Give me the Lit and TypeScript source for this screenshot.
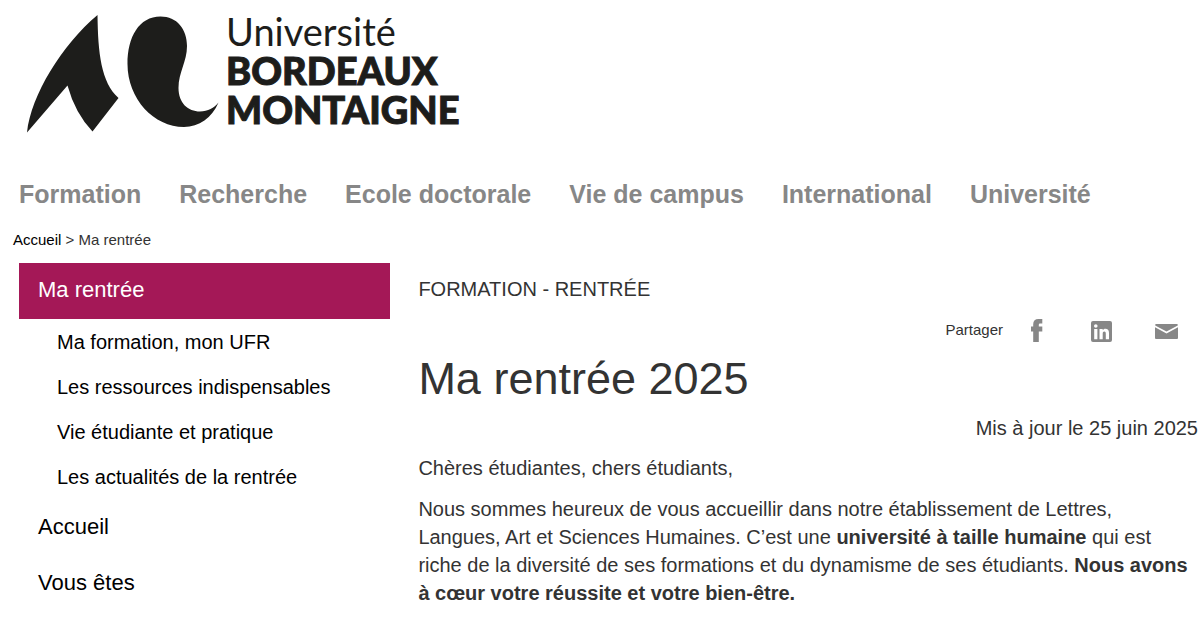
import { LitElement, html, css, svg } from "lit";
import { customElement } from "lit/decorators.js";

const SECTIONS = ["Formation", "Recherche", "Ecole doctorale", "Vie de campus", "International", "Université"];
const SUBPAGES = [
  "Ma formation, mon UFR",
  "Les ressources indispensables",
  "Vie étudiante et pratique",
  "Les actualités de la rentrée",
];

const SHARES = [
  {
    name: "Facebook",
    icon: svg`<path d="M8.200 24V13.600H6V8.600h2.200V6.200C8.200 2.800 10.200 1 13.500 1h3.800v4.600h-2c-1 0-1.500.4-1.500 1.300v1.700h3.500v5h-3.500V24z"/>`,
  },
  {
    name: "LinkedIn",
    icon: svg`<path fill-rule="evenodd" d="M3 3h17a2 2 0 0 1 2 2v17a2 2 0 0 1-2 2H3a2 2 0 0 1-2-2V5a2 2 0 0 1 2-2zM4.200 11V21.200h3.200V11zM5.800 6.200a1.800 1.800 0 1 0 0 3.600 1.800 1.800 0 0 0 0-3.600zM9.500 11V21.200h3.200v-5.500c0-1.500.5-2.200 1.600-2.200s1.500.8 1.500 2.200v5.500h3.200v-6.200c0-3-1.400-4.300-3.500-4.300-1.400 0-2.200.7-2.800 1.500v-1.200z"/>`,
  },
  {
    name: "Courriel",
    icon: svg`<path d="M0.500 6h22l.3 1.400L11.500 13.600.2 7.400zM0 9.200L11.500 15.500 23 9.200V20a1 1 0 0 1-1 1H1a1 1 0 0 1-1-1z"/>`,
  },
];

@customElement("site-header")
class SiteHeader extends LitElement {
  static styles = css`
    :host { display: block; }
    .logo { display: block; width: 440px; margin-left: 26px; }
    .mark { display: block; fill: #1d1d1b; }
    .word { font-family: Lato, "Open Sans", sans-serif; }
    .light { font-size: 38px; }
    .heavy { font-size: 38px; font-weight: 900; stroke: #1d1d1b; stroke-width: 1px; }
    .nav { display: flex; flex-wrap: wrap; gap: 0 38px; padding: 0 19px; margin-top: 39px; }
    .section { font-size: 25px; line-height: 30px; font-weight: 700; color: #878787; text-decoration: none; }
    .crumbs { padding-left: 13px; margin-top: 22px; font-size: 15px; line-height: 18px; }
    .home { color: #000; text-decoration: none; }
  `;
  render() {
    return html`
      <a class="logo" href="#" aria-label="Université Bordeaux Montaigne">
        <svg class="mark" width="440" height="140" viewBox="26 0 440 140">
          <path d="M97.500 15C98 53 101 82 118.500 98L92.500 131.500Q75 113 67.500 85.500L27 132.500C31 95 62 45 97.500 15Z"/>
          <path d="M160.500 16.500C177 16.500 187 29 187 46C187 62 178.500 72 178.500 88C178.500 103 188 111.500 200 111.500C208 111.500 214 108 218.500 102.500C212 118 199 127 184 127C154 127 127.500 99 127.500 64C127.500 37 139 16.500 160.500 16.500Z"/>
          <g class="word">
            <text class="light" x="226" y="46">Université</text>
            <text class="heavy" x="226" y="85">BORDEAUX</text>
            <text class="heavy" x="226" y="124">MONTAIGNE</text>
          </g>
        </svg>
      </a>
      <nav class="nav">${SECTIONS.map((s) => html`<a class="section" href="#">${s}</a>`)}</nav>
      <div class="crumbs"><a class="home" href="#">Accueil</a> &gt; Ma rentrée</div>
    `;
  }
}

@customElement("side-menu")
class SideMenu extends LitElement {
  static styles = css`
    :host { display: block; }
    .list { list-style: none; margin: 0; padding: 0; }
    .nested { padding-bottom: 1px; }
    .link { display: block; color: #000; text-decoration: none; }
    .top { padding: 13px 19px 15px; font-size: 22px; line-height: 28px; }
    .current { background: #a41857; color: #fff; }
    .sub { padding: 9px 19px 8px 38px; font-size: 20px; line-height: 28px; }
  `;
  render() {
    return html`<nav><ul class="list">
      <li><a class="link top current" href="#" aria-current="page">Ma rentrée</a>
        <ul class="list nested">${SUBPAGES.map((s) => html`<li><a class="link sub" href="#">${s}</a></li>`)}</ul>
      </li>
      <li><a class="link top" href="#">Accueil</a></li>
      <li><a class="link top" href="#">Vous êtes</a></li>
    </ul></nav>`;
  }
}

@customElement("app-root")
class AppRoot extends LitElement {
  static styles = css`
    :host { display: block; font-family: "Liberation Sans", Arial, sans-serif; color: #333; background: #fff; }
    .page { display: grid; grid-template-columns: 31.5% 1fr; gap: 28px; padding-left: 19px; margin-top: 14px; }
    .body { font-size: 20px; line-height: 28px; }
    .kicker { margin: 12px 0 0; text-transform: uppercase; }
    .share { display: flex; justify-content: flex-end; align-items: center; padding-right: 19px; margin-top: 13px; }
    .label { font-size: 15px; line-height: 28px; margin-right: 22px; }
    .icons { display: flex; gap: 41px; }
    .button { display: block; height: 24px; padding: 0; border: 0; background: none; }
    .glyph { display: block; fill: #878787; }
    .title { margin: 8px 0 0; font-size: 45px; line-height: 54px; font-weight: 400; }
    .date { margin: 8px 0 12px; text-align: right; }
    .text { margin: 0 0 13px; }
  `;
  render() {
    return html`
      <site-header></site-header>
      <div class="page">
        <side-menu></side-menu>
        <main class="body">
          <p class="kicker">Formation - Rentrée</p>
          <div class="share">
            <span class="label">Partager</span>
            <div class="icons">${SHARES.map((s) => html`
              <button class="button" aria-label=${s.name}>
                <svg class="glyph" width="24" height="24" viewBox="0 0 24 24">${s.icon}</svg>
              </button>`)}</div>
          </div>
          <h1 class="title">Ma rentrée 2025</h1>
          <p class="date">Mis à jour le 25 juin 2025</p>
          <p class="text">Chères étudiantes, chers étudiants,</p>
          <p class="text">Nous sommes heureux de vous accueillir dans notre établissement de Lettres, Langues, Art et Sciences Humaines. C’est une <strong>université à taille humaine</strong> qui est riche de la diversité de ses formations et du dynamisme de ses étudiants. <strong>Nous avons à cœur votre réussite et votre bien-être.</strong></p>
        </main>
      </div>
    `;
  }
}
